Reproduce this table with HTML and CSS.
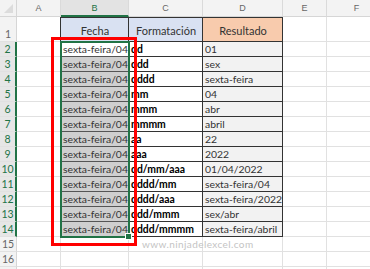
FILE: index.html
```html
<!DOCTYPE html>
<html>
<head>
<meta charset="utf-8">
<link rel="stylesheet" href="styles.css">
</head>
<body>
<div class="sheet">
  <div class="grid">
    <div class="corner"><span class="tri"></span></div>
    <div class="ch">A</div>
    <div class="ch sel">B</div>
    <div class="ch">C</div>
    <div class="ch">D</div>
    <div class="ch">E</div>
    <div class="ch last">F</div>

    <div class="rh">1</div>
    <div class="c ta"></div>
    <div class="c th blue">Fecha</div>
    <div class="c th blue">Formatación</div>
    <div class="c th peach">Resultado</div>
    <div class="c"></div>
    <div class="c last"></div>

    <div class="rh sel">2</div>
    <div class="c ta"></div>
    <div class="c b active">sexta-feira/04</div>
    <div class="c f">dd</div>
    <div class="c r">01</div>
    <div class="c"></div>
    <div class="c last"></div>

    <div class="rh sel">3</div>
    <div class="c ta"></div>
    <div class="c b">sexta-feira/04</div>
    <div class="c f">ddd</div>
    <div class="c r">sex</div>
    <div class="c"></div>
    <div class="c last"></div>

    <div class="rh sel">4</div>
    <div class="c ta"></div>
    <div class="c b">sexta-feira/04</div>
    <div class="c f">dddd</div>
    <div class="c r">sexta-feira</div>
    <div class="c"></div>
    <div class="c last"></div>

    <div class="rh sel">5</div>
    <div class="c ta"></div>
    <div class="c b">sexta-feira/04</div>
    <div class="c f">mm</div>
    <div class="c r">04</div>
    <div class="c"></div>
    <div class="c last"></div>

    <div class="rh sel">6</div>
    <div class="c ta"></div>
    <div class="c b">sexta-feira/04</div>
    <div class="c f">mmm</div>
    <div class="c r">abr</div>
    <div class="c"></div>
    <div class="c last"></div>

    <div class="rh sel">7</div>
    <div class="c ta"></div>
    <div class="c b">sexta-feira/04</div>
    <div class="c f">mmmm</div>
    <div class="c r">abril</div>
    <div class="c"></div>
    <div class="c last"></div>

    <div class="rh sel">8</div>
    <div class="c ta"></div>
    <div class="c b">sexta-feira/04</div>
    <div class="c f">aa</div>
    <div class="c r">22</div>
    <div class="c"></div>
    <div class="c last"></div>

    <div class="rh sel">9</div>
    <div class="c ta"></div>
    <div class="c b">sexta-feira/04</div>
    <div class="c f">aaa</div>
    <div class="c r">2022</div>
    <div class="c"></div>
    <div class="c last"></div>

    <div class="rh sel">10</div>
    <div class="c ta"></div>
    <div class="c b">sexta-feira/04</div>
    <div class="c f">dd/mm/aaa</div>
    <div class="c r">01/04/2022</div>
    <div class="c"></div>
    <div class="c last"></div>

    <div class="rh sel">11</div>
    <div class="c ta"></div>
    <div class="c b">sexta-feira/04</div>
    <div class="c f">dddd/mm</div>
    <div class="c r">sexta-feira/04</div>
    <div class="c"></div>
    <div class="c last"></div>

    <div class="rh sel">12</div>
    <div class="c ta"></div>
    <div class="c b">sexta-feira/04</div>
    <div class="c f">dddd/aaa</div>
    <div class="c r">sexta-feira/2022</div>
    <div class="c"></div>
    <div class="c last"></div>

    <div class="rh sel">13</div>
    <div class="c ta"></div>
    <div class="c b">sexta-feira/04</div>
    <div class="c f">ddd/mmm</div>
    <div class="c r">sex/abr</div>
    <div class="c"></div>
    <div class="c last"></div>

    <div class="rh sel">14</div>
    <div class="c ta"></div>
    <div class="c b">sexta-feira/04</div>
    <div class="c f">dddd/mmmm</div>
    <div class="c r">sexta-feira/abril</div>
    <div class="c"></div>
    <div class="c last"></div>

    <div class="rh">15</div>
    <div class="c"></div>
    <div class="c"></div>
    <div class="c wm"><span>www.ninjadelexcel.com</span></div>
    <div class="c"></div>
    <div class="c"></div>
    <div class="c last"></div>

    <div class="rh">16</div>
    <div class="c"></div>
    <div class="c"></div>
    <div class="c"></div>
    <div class="c"></div>
    <div class="c"></div>
    <div class="c last"></div>

    <div class="rh"></div>
    <div class="c"></div>
    <div class="c"></div>
    <div class="c"></div>
    <div class="c"></div>
    <div class="c"></div>
    <div class="c last"></div>
  </div>
  <div class="selection"><span class="handle"></span></div>
  <div class="redbox"></div>
</div>
</body>
</html>
```
FILE: styles.css
```css
html, body {
  margin: 0;
  padding: 0;
  background: #ffffff;
}
body {
  width: 370px;
  height: 269px;
  overflow: hidden;
  font-family: "Lato", "Liberation Sans", sans-serif;
}
.sheet {
  position: relative;
  width: 370px;
  height: 269px;
  overflow: hidden;
}
.grid {
  display: grid;
  grid-template-columns: 17px 44px 68px 74px 80px 44px 60px;
  grid-template-rows: 17px 25px repeat(16, 15px);
}
.grid > div {
  box-sizing: border-box;
  white-space: nowrap;
  overflow: hidden;
}
.corner {
  background: #f3f3f3;
  border-right: 1px solid #d6d6d6;
  border-bottom: 1px solid #d6d6d6;
}
.tri {
  display: block;
  width: 0;
  height: 0;
  margin: 4px 0 0 4px;
  border-left: 9px solid transparent;
  border-bottom: 9px solid #dcdcdc;
}
.ch {
  background: #f3f3f3;
  color: #666;
  font-family: "Liberation Sans", sans-serif;
  font-size: 9px;
  text-align: center;
  line-height: 16px;
  border-right: 1px solid #dadada;
  border-bottom: 1px solid #d6d6d6;
}
.ch.sel {
  background: #e3e3e3;
  color: #217346;
  border-bottom: 2px solid #217346;
}
.rh {
  background: #f3f3f3;
  color: #666;
  font-size: 10.5px;
  display: flex;
  align-items: flex-end;
  justify-content: center;
  padding-bottom: 1px;
  border-right: 1px solid #d6d6d6;
  border-bottom: 1px solid #e1e1e1;
}
.rh.sel {
  background: #e6e6e6;
  color: #217346;
  border-right: 2px solid #217346;
}
.c {
  background: #fff;
  border-right: 1px solid #e1e1e1;
  border-bottom: 1px solid #e1e1e1;
  font-size: 10.4px;
  color: #222;
  padding: 0 1px 1px 2px;
  display: flex;
  align-items: flex-end;
}
.c.last {
  border-right: none;
}
.c.ta {
  border-right: 1px solid #333;
}
.c.th {
  justify-content: center;
  border-top: 1px solid #333;
  border-right: 1px solid #333;
  border-bottom: 1px solid #333;
  color: #333;
  font-size: 11px;
  padding-bottom: 4px;
}
.blue {
  background: #d9e1f2;
}
.peach {
  background: #f8cbad;
}
.c.b {
  background: #cfcfcf;
  color: #333;
  border-right: 1px solid #333;
  border-bottom: 1px solid #555;
}
.c.b.active {
  background: #fff;
}
.c.f {
  font-weight: 700;
  color: #000;
  border-right: 1px solid #333;
  border-bottom: 1px solid #333;
}
.c.r {
  background: #f2f2f2;
  color: #333;
  border-right: 1px solid #333;
  border-bottom: 1px solid #333;
}
.grid > .c.wm {
  overflow: visible;
}
.wm span {
  color: #c4c4c4;
  font-size: 10px;
  letter-spacing: 0.4px;
  padding-left: 11px;
  position: relative;
  z-index: 1;
}
.selection {
  position: absolute;
  left: 60px;
  top: 41px;
  width: 70px;
  height: 197px;
  box-sizing: border-box;
  border: 2px solid #217346;
}
.handle {
  position: absolute;
  right: -4px;
  bottom: -4px;
  width: 5px;
  height: 5px;
  background: #217346;
  border: 1px solid #fff;
}
.redbox {
  position: absolute;
  left: 51px;
  top: 37px;
  width: 86px;
  height: 209px;
  box-sizing: border-box;
  border: 3px solid #ff0000;
}
```
